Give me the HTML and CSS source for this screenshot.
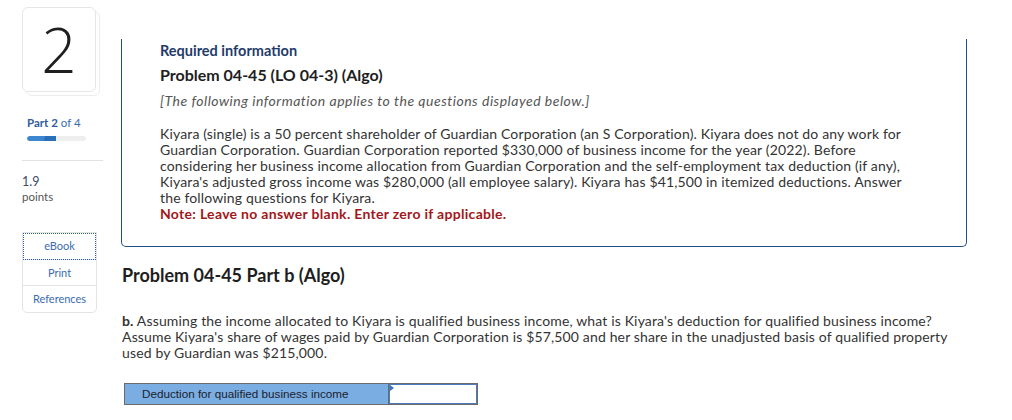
FILE: index.html
```html
<!DOCTYPE html>
<html>
<head>
<meta charset="utf-8">
<link rel="stylesheet" href="styles.css">
</head>
<body>
<div class="page">
  <aside class="side">
    <div class="qnum-wrap">
      <div class="qnum-shadow"></div>
      <div class="qnum">2</div>
    </div>
    <div class="part"><b>Part 2</b> of 4</div>
    <div class="progress"><div class="progress-fill"></div></div>
    <div class="divider"></div>
    <div class="pts">1.9</div>
    <div class="pts-label">points</div>
    <div class="tools">
      <div class="tool tool-focus">eBook</div>
      <div class="tool">Print</div>
      <div class="tool tool-last">References</div>
    </div>
  </aside>
  <main class="main">
    <section class="info">
      <div class="req">Required information</div>
      <div class="ptitle">Problem 04-45 (LO 04-3) (Algo)</div>
      <div class="intro">[The following information applies to the questions displayed below.]</div>
      <p class="body">Kiyara (single) is a 50 percent shareholder of Guardian Corporation (an S Corporation). Kiyara does not do any work for Guardian Corporation. Guardian Corporation reported $330,000 of business income for the year (2022). Before considering her business income allocation from Guardian Corporation and the self-employment tax deduction (if any), Kiyara's adjusted gross income was $280,000 (all employee salary). Kiyara has $41,500 in itemized deductions. Answer the following questions for Kiyara.<br><span class="note">Note: Leave no answer blank. Enter zero if applicable.</span></p>
    </section>
    <h2 class="parthead">Problem 04-45 Part b (Algo)</h2>
    <p class="question"><b>b.</b> Assuming the income allocated to Kiyara is qualified business income, what is Kiyara's deduction for qualified business income? Assume Kiyara's share of wages paid by Guardian Corporation is $57,500 and her share in the unadjusted basis of qualified property used by Guardian was $215,000.</p>
    <div class="answer">
      <div class="answer-label">Deduction for qualified business income</div>
      <div class="answer-input"><span class="flag"></span></div>
    </div>
  </main>
</div>
</body>
</html>
```
FILE: styles.css
```css
* { box-sizing: border-box; }
html, body { margin: 0; padding: 0; background: #fff; }
body { font-family: "Lato", "Open Sans", sans-serif; color: #2b2b2b; }
.page { display: flex; width: 1012px; height: 420px; overflow: hidden; }
.side { width: 121px; flex: none; padding-left: 22px; padding-top: 7px; }
.qnum-wrap { position: relative; width: 78px; height: 89px; }
.qnum-shadow { position: absolute; left: 4px; top: 4px; width: 74px; height: 85px; border: 1px solid #ececec; border-radius: 6px; background: #fff; }
.qnum { position: absolute; left: 0; top: 0; width: 74px; height: 85px; border: 1px solid #e6e6e6; border-radius: 6px; background: #fff; font-family: "Open Sans", sans-serif; font-size: 62px; font-weight: 300; line-height: 82px; text-align: center; color: #1f1f1f; }
.part { margin-top: 20px; margin-left: 5px; font-size: 11.5px; line-height: 14px; color: #3a6cb0; }
.part b { color: #2f5d9e; }
.progress { margin-left: 5px; margin-top: 6px; width: 59px; height: 5px; border-radius: 3px; background: #eeeeee; overflow: hidden; }
.progress-fill { width: 29px; height: 100%; background: linear-gradient(100deg, #3d86d2 60%, #2a6fb8 60%); border-radius: 3px 0 0 3px; }
.divider { margin-top: 19px; width: 81px; height: 1px; background: #e2e2e2; }
.pts { margin-top: 13px; font-size: 12.5px; line-height: 15px; color: #3a4d6a; }
.pts-label { margin-top: 1px; font-size: 11.5px; line-height: 14px; color: #555; }
.tools { margin-top: 28px; width: 75px; border: 1px solid #e4e4e4; border-radius: 0 0 5px 5px; }
.tool { height: 26px; line-height: 25px; font-size: 11px; text-align: center; color: #3a6cb0; border-bottom: 1px solid #e4e4e4; }
.tool-focus { height: 27px; outline: 1px dotted #2a5bb0; outline-offset: -1px; }
.tool-last { border-bottom: none; }
.main { flex: 1; padding-top: 39px; }
.info { width: 846px; border: 1px solid #1f4c8a; border-top: none; border-radius: 0 0 5px 5px; padding: 3px 47px 24px 38px; }
.req { font-size: 14.5px; font-weight: 700; color: #1f3c6b; line-height: 17px; }
.ptitle { margin-top: 6px; font-size: 16px; font-weight: 700; color: #1e1e1e; line-height: 20px; white-space: nowrap; }
.intro { margin-top: 8px; font-size: 14px; letter-spacing: 0.5px; font-style: italic; color: #555; line-height: 16px; white-space: nowrap; }
.body { margin: 17px 0 0; font-size: 14px; letter-spacing: 0.15px; line-height: 16px; color: #333; }
.note { font-weight: 700; color: #a3161b; letter-spacing: 0.3px; }
.parthead { margin: 17px 0 0 1px; font-size: 18px; font-weight: 700; color: #1e1e1e; line-height: 22px; }
.question { margin: 27px 0 0 1px; width: 845px; font-size: 14px; letter-spacing: 0.15px; line-height: 16px; color: #333; }
.answer { display: flex; margin: 22px 0 0 3px; width: 354px; height: 22px; border: 1px solid #6b6b6b; }
.answer-label { width: 264px; background: #7aaee3; border-right: 1px solid #6b6b6b; font-family: "Liberation Sans", Arial, sans-serif; font-size: 11.7px; line-height: 20px; padding-left: 17px; color: #1c1c2c; }
.answer-input { position: relative; flex: 1; background: #fff; border: 1px solid #4a7bbd; }
.flag { position: absolute; left: 0; top: 0; width: 0; height: 0; border-top: 3px solid transparent; border-bottom: 3px solid transparent; border-left: 4px solid #3b73c2; }
```
